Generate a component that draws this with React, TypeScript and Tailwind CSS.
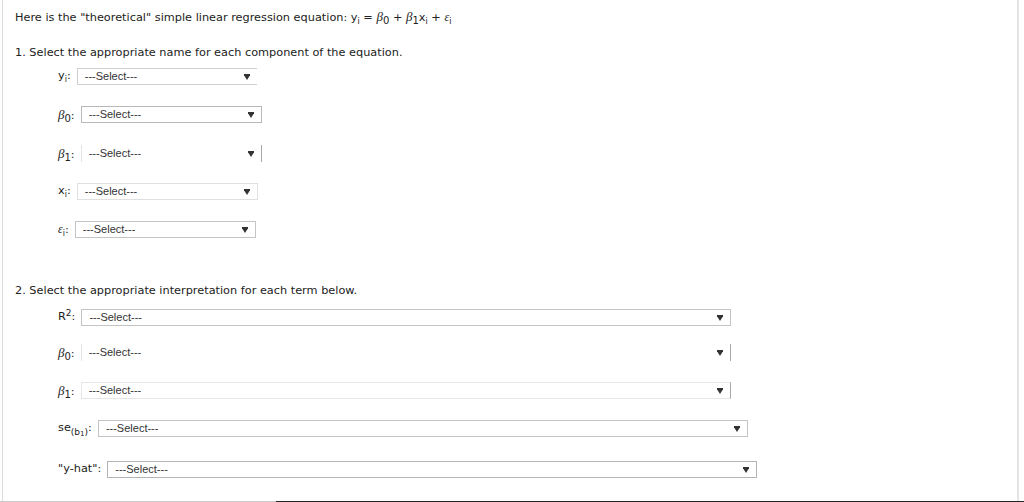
import React from "react";

const Arrow = () => (
  <svg width="6" height="6" viewBox="0 0 6 6" className="block">
    <path d="M0 0H6V1.2L3 6L0 1.2Z" fill="#333" />
  </svg>
);

type SelectProps = { width: string; border: string };

const Select = ({ width, border }: SelectProps) => (
  <div
    className={`${width} ${border} h-[17px] bg-white flex items-center justify-between pl-[7px] pr-[7px] font-['Liberation_Sans',Arial,sans-serif] text-[11px] text-[#333]`}
  >
    <span>---Select---</span>
    <Arrow />
  </div>
);

const Lo = ({ children, size = "text-[9px]", y = "top-[3px]" }: { children: React.ReactNode; size?: string; y?: string }) => (
  <span className={`relative ${y} ${size} leading-none`}>{children}</span>
);

const Beta = ({ sub }: { sub: string }) => (
  <span>
    <span className="font-['Liberation_Serif',serif] italic text-[13px]">β</span>
    <Lo size="text-[10px]">{sub}</Lo>
  </span>
);

const Sub = ({ base, sub, serif }: { base: string; sub: string; serif?: boolean }) => (
  <span>
    <span className={serif ? "font-['Liberation_Serif',serif] italic text-[12px]" : ""}>{base}</span>
    <Lo size="text-[8px]">{sub}</Lo>
  </span>
);

type Row = { label: React.ReactNode; mt: string; width: string; border: string };

const part1: Row[] = [
  { label: <Sub base="y" sub="i" />, mt: "mt-[7px]", width: "w-[180px]", border: "border-y border-l border-[#cfcfcf]" },
  { label: <Beta sub="0" />, mt: "mt-[21px]", width: "w-[181px]", border: "border border-[#b8b8b8]" },
  { label: <Beta sub="1" />, mt: "mt-[22px]", width: "w-[181px]", border: "border-l border-l-[#e4e4e4] border-r border-r-[#a8a8a8]" },
  { label: <Sub base="x" sub="i" />, mt: "mt-[21px]", width: "w-[181px]", border: "border border-[#e0e0e0]" },
  { label: <Sub base="ε" sub="i" serif />, mt: "mt-[21px]", width: "w-[181px]", border: "border border-[#c4c4c4]" },
];

const part2: Row[] = [
  {
    label: (
      <span>
        R<Lo size="text-[9px]" y="-top-[4px]">2</Lo>
      </span>
    ),
    mt: "mt-[10px]",
    width: "w-[650px]",
    border: "border border-[#c4c4c4]",
  },
  { label: <Beta sub="0" />, mt: "mt-[18px]", width: "w-[650px]", border: "border-l border-l-[#e4e4e4] border-r border-r-[#a8a8a8]" },
  { label: <Beta sub="1" />, mt: "mt-[21px]", width: "w-[650px]", border: "border border-[#e6e6e6] border-r-[#a8a8a8]" },
  {
    label: (
      <span>
        se
        <Lo size="text-[9px]" y="top-[4px]">
          (b<span className="relative top-[1px] text-[7px]">1</span>)
        </Lo>
      </span>
    ),
    mt: "mt-[21px]",
    width: "w-[650px]",
    border: "border border-[#c4c4c4]",
  },
  { label: <span>"y-hat"</span>, mt: "mt-[24px]", width: "w-[650px]", border: "border border-[#b4b4b4]" },
];

const FormRow = ({ row }: { row: Row }) => (
  <div className={`${row.mt} ml-[43px] flex items-center h-[17px]`}>
    <span className="mr-[6px] whitespace-nowrap">
      {row.label}:
    </span>
    <Select width={row.width} border={row.border} />
  </div>
);

export default function App() {
  return (
    <div className="h-[502px] w-[1024px] bg-white overflow-hidden font-['DejaVu_Sans',Verdana,sans-serif] text-[11.3px] text-[#222]">
      <div className="flex h-[501px]">
        <div className="ml-[2px] w-[1017px] border-l border-[#dcdcdc] border-r-2 border-r-[#e4e4e4] pl-[12px]">
          <div className="pt-[9px] h-[25px] flex items-center">
            <span className="whitespace-nowrap">
              Here is the "theoretical" simple linear regression equation: <Sub base="y" sub="i" /> ={" "}
              <Beta sub="0" /> + <Beta sub="1" />
              <Sub base="x" sub="i" /> + <Sub base="ε" sub="i" serif />
            </span>
          </div>
          <div className="mt-[20px] h-[16px] flex items-center">
            1. Select the appropriate name for each component of the equation.
          </div>
          {part1.map((r, i) => (
            <FormRow key={i} row={r} />
          ))}
          <div className="mt-[45px] h-[16px] flex items-center">
            2. Select the appropriate interpretation for each term below.
          </div>
          {part2.map((r, i) => (
            <FormRow key={i} row={r} />
          ))}
        </div>
      </div>
      <div className="flex h-px">
        <div className="w-[276px] bg-[#c8c8c8]" />
        <div className="flex-1 bg-[#222]" />
      </div>
    </div>
  );
}
